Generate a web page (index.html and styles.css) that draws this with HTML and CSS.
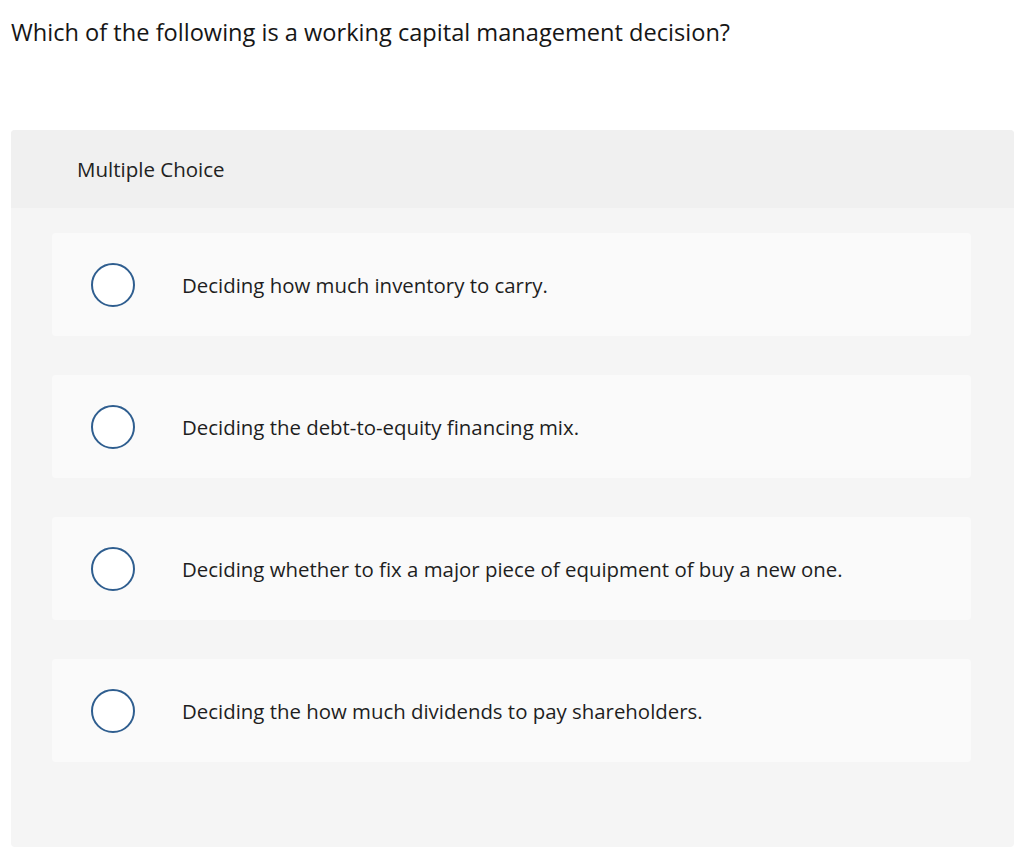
FILE: index.html
```html
<!DOCTYPE html>
<html>
<head>
<meta charset="utf-8">
<link rel="stylesheet" href="styles.css">
</head>
<body>
<div class="question">Which of the following is a working capital management decision?</div>
<div class="panel">
  <div class="panel-head">Multiple Choice</div>
  <div class="panel-body">
    <div class="option"><span class="radio"></span><span class="label">Deciding how much inventory to carry.</span></div>
    <div class="option"><span class="radio"></span><span class="label">Deciding the debt-to-equity financing mix.</span></div>
    <div class="option"><span class="radio"></span><span class="label">Deciding whether to fix a major piece of equipment of buy a new one.</span></div>
    <div class="option"><span class="radio"></span><span class="label">Deciding the how much dividends to pay shareholders.</span></div>
  </div>
</div>
</body>
</html>
```
FILE: styles.css
```css
html, body {
  margin: 0;
  padding: 0;
  background: #ffffff;
}
body {
  font-family: "Open Sans", "Liberation Sans", sans-serif;
  color: #1c1c1c;
  width: 1024px;
  font-variant-ligatures: none;
}
.question {
  font-size: 23.6px;
  line-height: 32px;
  padding: 16px 0 0 11px;
  height: 114px;
  color: #161616;
}
.panel {
  margin-left: 11px;
  width: 1003px;
  border-radius: 4px;
  overflow: hidden;
  background: #f5f5f5;
}
.panel-head {
  height: 78px;
  background: #f0f0f0;
  display: flex;
  align-items: center;
  padding-left: 66px;
  font-size: 20.5px;
  color: #222;
}
.panel-body {
  padding: 25px 43px 85px 41px;
  display: flex;
  flex-direction: column;
  gap: 39px;
}
.option {
  height: 103px;
  background: #fafafa;
  border-radius: 4px;
  display: flex;
  align-items: center;
  padding-left: 39px;
}
.radio {
  width: 44px;
  height: 44px;
  box-sizing: border-box;
  border: 2px solid #2f5e8f;
  border-radius: 50%;
  background: #fff;
  flex: none;
}
.label {
  margin-left: 47px;
  font-size: 20.4px;
  color: #1e1e1e;
}
```
